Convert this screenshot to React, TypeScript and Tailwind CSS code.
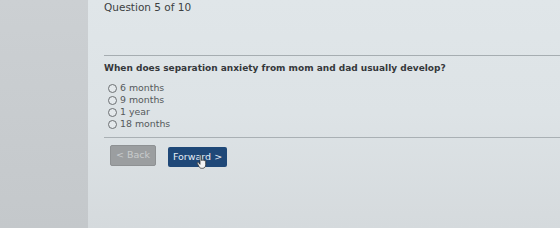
import React from "react";

export default function App() {
  const options = ["6 months", "9 months", "1 year", "18 months"];
  return (
    <div
      className="w-[560px] h-[228px] flex overflow-hidden bg-[#dce2e5]"
      style={{ fontFamily: '"DejaVu Sans", Verdana, sans-serif' }}
    >
      <div className="w-[88px] shrink-0 bg-gradient-to-b from-[#ccd0d3] to-[#c4c8cb]" />
      <div className="flex-1 flex flex-col pl-[16px] bg-gradient-to-b from-[#e0e6e9] via-[#dde3e6] to-[#d5dadd]">
        <div className="pt-[1px] text-[10.5px] leading-[13px] text-[#3c3f42]">Question 5 of 10</div>
        <div className="mt-[41px] border-t border-[#a6adb1]" />
        <div className="mt-[6px] text-[9px] leading-[12px] font-bold text-[#35383b]">
          When does separation anxiety from mom and dad usually develop?
        </div>
        <div className="mt-[8px] pl-[4px] flex flex-col">
          {options.map((o) => (
            <div key={o} className="flex items-center h-[12px] gap-[3px]">
              <span className="w-[9px] h-[9px] rounded-full border border-[#6c7073] bg-[#e4e9ec]" />
              <span className="text-[9.4px] leading-[12px] text-[#55595c]">{o}</span>
            </div>
          ))}
        </div>
        <div className="mt-[7px] border-t border-[#a9b0b4]" />
        <div className="mt-[7px] pl-[6px] flex items-start gap-[12px]">
          <div className="w-[46px] h-[21px] flex items-center justify-center rounded-[2px] bg-[#9b9ea0] border border-[#8e9193] text-[9.5px] text-[#c9cccd]">
            &lt; Back
          </div>
          <div className="relative mt-[2px] w-[59px] h-[20px] flex items-center justify-center rounded-[2px] bg-[#1f4878] text-[9.5px] text-[#e6edf5]">
            Forward &gt;
            <svg
              className="absolute left-[28px] top-[7px]"
              width="12"
              height="15"
              viewBox="0 0 12 15"
            >
              <path
                d="M4 1.5c0-.8 1.4-.8 1.4 0v5l.2-.2c.3-.6 1.3-.5 1.4.2.3-.6 1.3-.5 1.4.3.4-.5 1.3-.3 1.3.5v3.5c0 2-1.3 3.5-3 3.5H5.5c-1 0-1.8-.6-2.4-1.5L1.3 9.4c-.4-.7.5-1.4 1.1-.8L4 10.3z"
                fill="#f3f3f3"
                stroke="#333"
                strokeWidth="0.8"
              />
            </svg>
          </div>
        </div>
      </div>
    </div>
  );
}
